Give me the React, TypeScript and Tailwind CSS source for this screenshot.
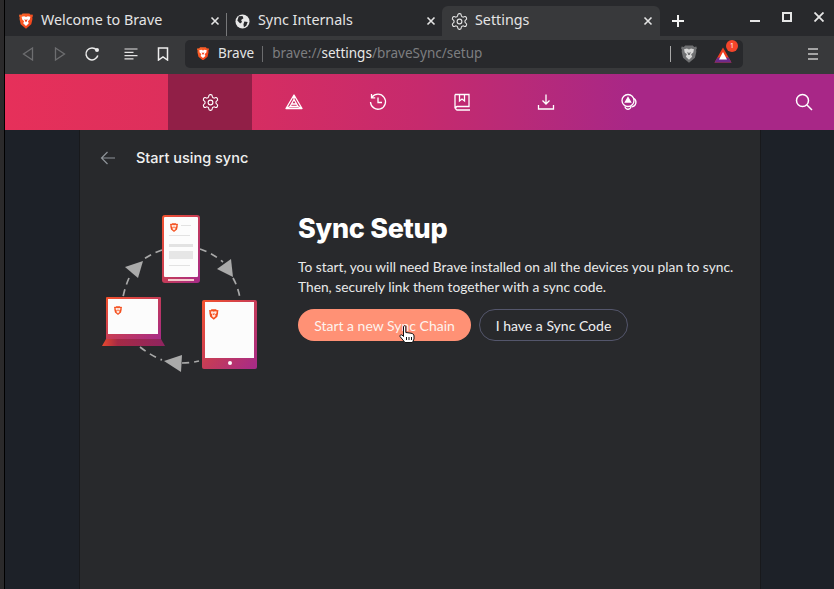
import React from "react";

const sans = "font-['Noto_Sans',sans-serif]";
const body = "font-['Lato','Noto_Sans',sans-serif]";

const shield = "M3.6 0.4 L10.4 0.4 L11.6 1.7 L13.5 1.4 L14 3 L13.3 4.2 L13.5 6 L12.3 11.4 L7 15.8 L1.7 11.4 L0.5 6 L0.7 4.2 L0 3 L0.5 1.4 L2.4 1.7 Z";
const lion = "M2.6 3.8 L5.2 3.2 L7 4 L8.8 3.2 L11.4 3.8 L10.8 6.6 L8.9 8.2 L9.8 10.4 L7 13 L4.2 10.4 L5.1 8.2 L3.2 6.6 Z";

function BraveLogo({ size = 14 }: { size?: number }) {
  return (
    <svg width={size} height={size * 1.14} viewBox="0 0 14 16" className="shrink-0">
      <defs>
        <linearGradient id="bl" x1="0" y1="0" x2="1" y2="1">
          <stop offset="0" stopColor="#ff6a2b" />
          <stop offset="1" stopColor="#ee3a18" />
        </linearGradient>
      </defs>
      <path d={shield} fill="url(#bl)" />
      <path d={lion} fill="#fff" />
      <path d="M5.4 6 L7 7 L8.6 6 L7.7 8.8 L6.3 8.8 Z" fill="#f0401c" />
    </svg>
  );
}

function CloseX() {
  return (
    <svg width="10" height="10" viewBox="0 0 10 10" className="shrink-0">
      <path d="M1.5 1.5 L8.5 8.5 M8.5 1.5 L1.5 8.5" stroke="#e4e4e4" strokeWidth="1.6" />
    </svg>
  );
}

function Gear({ size = 18, color = "#e8e8e8", sw = 1.5 }: { size?: number; color?: string; sw?: number }) {
  return (
    <svg width={size} height={size} viewBox="0 0 24 24" fill="none" stroke={color} strokeWidth={sw} strokeLinejoin="round" className="shrink-0">
      <path d="M12.22 2h-.44a2 2 0 0 0-2 2v.18a2 2 0 0 1-1 1.73l-.43.25a2 2 0 0 1-2 0l-.15-.08a2 2 0 0 0-2.73.73l-.22.38a2 2 0 0 0 .73 2.73l.15.1a2 2 0 0 1 1 1.72v.51a2 2 0 0 1-1 1.74l-.15.09a2 2 0 0 0-.73 2.73l.22.38a2 2 0 0 0 2.73.73l.15-.08a2 2 0 0 1 2 0l.43.25a2 2 0 0 1 1 1.73V20a2 2 0 0 0 2 2h.44a2 2 0 0 0 2-2v-.18a2 2 0 0 1 1-1.73l.43-.25a2 2 0 0 1 2 0l.15.08a2 2 0 0 0 2.73-.73l.22-.39a2 2 0 0 0-.73-2.73l-.15-.08a2 2 0 0 1-1-1.74v-.5a2 2 0 0 1 1-1.74l.15-.09a2 2 0 0 0 .73-2.73l-.22-.38a2 2 0 0 0-2.73-.73l-.15.08a2 2 0 0 1-2 0l-.43-.25a2 2 0 0 1-1-1.73V4a2 2 0 0 0-2-2z" />
      <circle cx="12" cy="12" r="3" />
    </svg>
  );
}

function Tab({ children, title, active, width, pad }: { children: React.ReactNode; title: string; active?: boolean; width: string; pad: string }) {
  return (
    <div className={`${width} ${pad} h-[30px] flex items-center gap-[7px] ${active ? "bg-[#38393b] rounded-t-[6px]" : ""}`}>
      <span className="w-[17px] flex justify-center shrink-0">{children}</span>
      <span className={`${sans} flex-1 text-[14.3px] leading-[20px] -mt-[3px] text-[#e4e4e4] whitespace-nowrap`}>{title}</span>
      <CloseX />
    </div>
  );
}

function NavIcon({ active, children }: { active?: boolean; children: React.ReactNode }) {
  return <div className={`w-[84px] h-full flex items-center justify-center ${active ? "bg-[#911f47]" : ""}`}>{children}</div>;
}

const navProps = { width: 18, height: 18, viewBox: "0 0 18 18", fill: "none", stroke: "#fff", strokeWidth: 1.3 };

function BraveLogoMini({ x, y, size }: { x: number; y: number; size: number }) {
  const s = size / 14;
  return (
    <g transform={`translate(${x} ${y}) scale(${s})`}>
      <path d={shield} fill="#f4501f" />
      <path d={lion} fill="#ffe6dc" />
      <path d="M5.4 6 L7 7 L8.6 6 L7.7 8.8 L6.3 8.8 Z" fill="#f4501f" />
    </g>
  );
}

function Illustration() {
  return (
    <svg width="160" height="165" viewBox="0 0 160 165" className="shrink-0">
      <defs>
        <linearGradient id="dev" x1="0" y1="0" x2="1" y2="1">
          <stop offset="0" stopColor="#f4522c" />
          <stop offset="0.55" stopColor="#c23a5c" />
          <stop offset="1" stopColor="#a62a8a" />
        </linearGradient>
        <linearGradient id="base" x1="0" y1="0" x2="1" y2="0">
          <stop offset="0" stopColor="#e8482e" />
          <stop offset="0.25" stopColor="#a52a45" />
          <stop offset="1" stopColor="#8f2460" />
        </linearGradient>
      </defs>
      <g fill="none" stroke="#a9a9a9" strokeWidth="1.7" strokeDasharray="7 5">
        <path d="M62 38 Q53 41 44 47" />
        <path d="M29 66 Q25 75 23 85" />
        <path d="M100 37 Q112 41 123 50" />
        <path d="M133 66 Q138 75 140 86" />
        <path d="M40 135 Q50 143 62 148" />
        <path d="M82 151 Q91 151 99 149" />
      </g>
      <g fill="#aaaaaa">
        <path d="M25 55 L43 49 L38 66 Z" />
        <path d="M117 57 L131 47 L133 65 Z" />
        <path d="M64 149 L82 143 L81 160 Z" />
      </g>
      {/* phone */}
      <rect x="62" y="3" width="38" height="68" rx="3" fill="url(#dev)" />
      <rect x="64" y="5" width="34" height="60" rx="1" fill="#fcfcfc" />
      <rect x="68" y="67" width="26" height="2" fill="#f3c9cc" />
      <BraveLogoMini x={70} y={11} size={8} />
      <rect x="81" y="13" width="10" height="1" fill="#e2e2e2" />
      <rect x="69" y="23" width="21" height="1" fill="#e2e2e2" />
      <rect x="69" y="32" width="24" height="3" fill="#e2e2e2" />
      <rect x="69" y="39" width="24" height="8" fill="#e6e6e6" />
      <rect x="69" y="53" width="21" height="1" fill="#e2e2e2" />
      {/* laptop */}
      <rect x="6" y="85" width="55" height="43" rx="1" fill="url(#dev)" />
      <rect x="8" y="87" width="50" height="35" fill="#fcfcfc" />
      <path d="M6 127 L61 127 L65 134 L2 134 Z" fill="url(#base)" />
      <BraveLogoMini x={14} y={94} size={8} />
      {/* tablet */}
      <rect x="102" y="88" width="55" height="69" rx="2" fill="url(#dev)" />
      <rect x="105" y="90" width="49" height="56" fill="#fcfcfc" />
      <circle cx="130" cy="151" r="2" fill="#fcfcfc" />
      <BraveLogoMini x={109} y={97} size={9.5} />
    </svg>
  );
}

export default function App() {
  return (
    <div className="w-[834px] h-[589px] flex overflow-hidden bg-[#1d2128]">
      <div className="w-[5px] shrink-0 bg-[#2b2a2b] border-r border-black" />
      <div className="flex-1 flex flex-col min-w-0">
        {/* tab strip */}
        <div className="h-[36px] shrink-0 bg-[#28292c] flex items-end">
          <Tab title="Welcome to Brave" width="w-[221px]" pad="pl-[12px] pr-[6px]">
            <BraveLogo size={14} />
          </Tab>
          <div className="w-px h-[23px] bg-[#77787a] shrink-0" />
          <Tab title="Sync Internals" width="w-[215px]" pad="pl-[7px] pr-[6px]">
            <svg width="15" height="15" viewBox="0 0 16 16" className="shrink-0">
              <circle cx="8" cy="8" r="7.5" fill="#e8e8e8" />
              <path d="M4 2.5 L8 2 L9 4.5 L6.5 6.5 L7.5 8.5 L5.5 10 L2.5 7 Z M10 8 L13.5 8.5 L12 12.5 L9.5 14 L9 11 Z" fill="#28292c" />
            </svg>
          </Tab>
          <Tab title="Settings" width="w-[218px]" pad="pl-[9px] pr-[7px]" active>
            <Gear size={19} color="#e4e4e4" sw={1.4} />
          </Tab>
          <svg width="14" height="14" viewBox="0 0 14 14" className="ml-[11px] mb-[8px] shrink-0">
            <path d="M7 1 V13 M1 7 H13" stroke="#f2f2f2" strokeWidth="2" />
          </svg>
          <div className="flex-1" />
          <div className="flex items-start self-start mt-[12px] gap-[22px] pr-[10px]">
            <div className="w-[10px] h-[2px] bg-[#e6e6e6] mt-[8px]" />
            <div className="w-[10px] h-[10px] border-2 border-[#e6e6e6]" />
            <svg width="10" height="10" viewBox="0 0 10 10"><path d="M0.5 0.5 L9.5 9.5 M9.5 0.5 L0.5 9.5" stroke="#e6e6e6" strokeWidth="1.8" /></svg>
          </div>
        </div>

        {/* toolbar */}
        <div className="h-[38px] shrink-0 bg-[#38393b] flex items-center">
          <div className="w-[180px] flex items-center shrink-0 pl-[17px] -mt-[3px]">
            <svg width="12" height="14" viewBox="0 0 12 14" className="shrink-0"><path d="M10.5 1 L1.5 7 L10.5 13 Z" fill="none" stroke="#6d6e70" strokeWidth="1.3" /></svg>
            <svg width="12" height="14" viewBox="0 0 12 14" className="ml-[20px] shrink-0"><path d="M1.5 1 L10.5 7 L1.5 13 Z" fill="none" stroke="#6d6e70" strokeWidth="1.3" /></svg>
            <svg width="16" height="16" viewBox="0 0 16 16" className="ml-[18px] shrink-0">
              <path d="M13.8 9.5 A6 6 0 1 1 12.6 4" fill="none" stroke="#ededed" strokeWidth="1.5" />
              <circle cx="13" cy="4" r="2" fill="#ededed" />
            </svg>
            <svg width="14" height="12" viewBox="0 0 14 12" className="ml-[24px] shrink-0">
              <path d="M0.5 1 H13.5 M0.5 4.3 H9.5 M0.5 7.6 H13.5 M0.5 10.9 H9.5" stroke="#e4e4e4" strokeWidth="1.2" />
            </svg>
            <svg width="12" height="14" viewBox="0 0 12 14" className="ml-[19px] shrink-0">
              <path d="M1.5 1 H10.5 V13 L6 9.8 L1.5 13 Z" fill="none" stroke="#ededed" strokeWidth="1.5" />
            </svg>
          </div>
          <div className="w-[558px] h-[28px] -mt-[3px] rounded-[5px] bg-[#28292c] flex items-center pl-[12px] pr-[6px] shrink-0 relative">
            <BraveLogo size={12} />
            <span className={`${sans} text-[13.5px] leading-[18px] -mt-[1px] text-[#e4e4e4] ml-[9px]`}>Brave</span>
            <div className="w-px h-[16px] bg-[#6b6c6e] ml-[8px]" />
            <span className={`${sans} text-[13.5px] leading-[18px] -mt-[1px] text-[#7d7e80] ml-[9px] whitespace-nowrap`}>
              brave://<span className="text-[#e8e8e8]">settings</span>/braveSync/setup
            </span>
            <div className="flex-1" />
            <div className="w-px h-[16px] bg-[#a8a8a8]" />
            <svg width="16" height="18" viewBox="0 0 14 16" className="ml-[10px] shrink-0">
              <path d={shield} fill="#707173" />
              <path d={lion} fill="#d9d9d9" />
              <path d="M5.4 6 L7 7 L8.6 6 L7.7 8.8 L6.3 8.8 Z" fill="#707173" />
            </svg>
            <div className="relative ml-[17px] w-[18px] h-[16px] mr-[5px] mt-[2px]">
              <svg width="18" height="16" viewBox="0 0 18 16">
                <path d="M9 0.5 L17.5 15.5 L0.5 15.5 Z" fill="#ef3e22" />
                <path d="M0.5 15.5 L3.5 10.5 L14.5 10.5 L17.5 15.5 Z" fill="#6d2a8a" />
                <path d="M9 5 L13 12.5 L5 12.5 Z" fill="#fff" />
              </svg>
              <div className="absolute -top-[7px] left-[12px] w-[12px] h-[12px] rounded-full bg-[#f4452b] flex items-center justify-center text-[7px] leading-none text-white font-['Noto_Sans',sans-serif]">1</div>
            </div>
          </div>
          <div className="flex-1 flex justify-end pr-[16px] -mt-[3px]">
            <svg width="10" height="12" viewBox="0 0 10 12"><path d="M0 1 H10 M0 6 H10 M0 11 H10" stroke="#c8c8c8" strokeWidth="1.6" /></svg>
          </div>
        </div>

        {/* nav */}
        <div className="h-[56px] shrink-0 flex items-center bg-[linear-gradient(90deg,#e6305a_0%,#dd2f5c_20%,#c62a6d_50%,#b82a78_62%,#a82787_76%,#a82787_100%)] pl-[163px] pr-[21px]">
          <NavIcon active><Gear size={19} color="#ffffff" sw={1.4} /></NavIcon>
          <NavIcon>
            <svg {...navProps}><path d="M9 2 L17 15.5 L1 15.5 Z M9 6.5 L13 13.5 L5 13.5 Z M9 2 V6.5 M1 15.5 L5 13.5 M17 15.5 L13 13.5 M6.5 11 H11.5" strokeLinejoin="round" /></svg>
          </NavIcon>
          <NavIcon>
            <svg {...navProps}><path d="M3 4.2 A7.5 7.5 0 1 1 1.5 9 M2.5 1 V4.8 H6.2 M9 4.5 V9.5 H13" /></svg>
          </NavIcon>
          <NavIcon>
            <svg {...navProps}><path d="M2 1.5 H16 V13.5 H4 A1.8 1.8 0 0 0 4 17 H17 M2 1.5 V15.5 M6.5 1.5 V8 L9 6 L11.5 8 V1.5" /></svg>
          </NavIcon>
          <NavIcon>
            <svg {...navProps}><path d="M9 1.5 V11 M5.5 7.5 L9 11 L12.5 7.5 M1.5 12 V16 H16.5 V12" /></svg>
          </NavIcon>
          <NavIcon>
            <svg {...navProps}>
              <circle cx="7" cy="7.5" r="6" />
              <path d="M7 4.5 L9.6 9 L4.4 9 Z" fill="#fff" />
              <path d="M13 5.5 A4.6 4.6 0 0 1 11 13.8 M10 13 A3 3 0 1 1 4 13.5" />
            </svg>
          </NavIcon>
          <div className="flex-1" />
          <svg {...navProps} strokeWidth={1.5}><circle cx="7.5" cy="7.5" r="6" /><path d="M12 12 L17 17" /></svg>
        </div>

        {/* content */}
        <div className="flex-1 flex min-h-0">
          <div className="w-[75px] shrink-0 border-r border-[#18191c]" />
          <div className="w-[681px] shrink-0 bg-[#28292c] border-r border-[#18191c] pl-[20px]">
            <div className="h-[56px] flex items-center">
              <svg width="16" height="14" viewBox="0 0 16 14" className="shrink-0">
                <path d="M15 7 H1.5 M7.5 1 L1.5 7 L7.5 13" fill="none" stroke="#8e9399" strokeWidth="1.2" />
              </svg>
              <span className="font-['Inter',sans-serif] font-medium text-[14.5px] text-[#f0f0f0] ml-[20px]">Start using sync</span>
            </div>
            <div className="flex mt-[14px]">
              <div className="mt-[12px] w-[198px] shrink-0"><Illustration /></div>
              <div>
                <h1 className="font-['Inter',sans-serif] font-extrabold text-[27px] leading-[36px] text-white mt-[11px] tracking-[-0.3px]">Sync Setup</h1>
                <p className={`${body} text-[13.75px] leading-[19.5px] text-[#e9e9ea] mt-[10px] whitespace-nowrap`}>
                  To start, you will need Brave installed on all the devices you plan to sync.
                  <br />
                  Then, securely link them together with a sync code.
                </p>
                <div className="flex items-center gap-[8px] mt-[13px]">
                  <div className="relative w-[173px] h-[32px] rounded-full bg-[#ff9175] flex items-center justify-center">
                    <span className={`${body} text-[14px] text-[#fdf3ee] whitespace-nowrap`}>Start a new Sync Chain</span>
                    <svg width="17" height="19" viewBox="0 0 17 19" className="absolute left-[101px] top-[16px]">
                      <path d="M4.5 1.5 C4.5 0.5 6.8 0.5 6.8 1.5 V7.5 L12 8.2 C14 8.6 15 9.4 15 11 V14 L13.5 17.5 H6 L1 11.5 C0.5 10.5 1.8 9.3 3 10 L4.5 11.5 Z" fill="#fff" stroke="#111" strokeWidth="1" />
                      <path d="M7.5 12 V15 M10 12 V15 M12.5 12 V15" stroke="#111" strokeWidth="1" />
                    </svg>
                  </div>
                  <div className="w-[149px] h-[32px] rounded-full border border-[#54566c] flex items-center justify-center">
                    <span className={`${body} text-[14px] text-[#f0f0f2] whitespace-nowrap`}>I have a Sync Code</span>
                  </div>
                </div>
              </div>
            </div>
          </div>
          <div className="flex-1" />
        </div>
      </div>
    </div>
  );
}
